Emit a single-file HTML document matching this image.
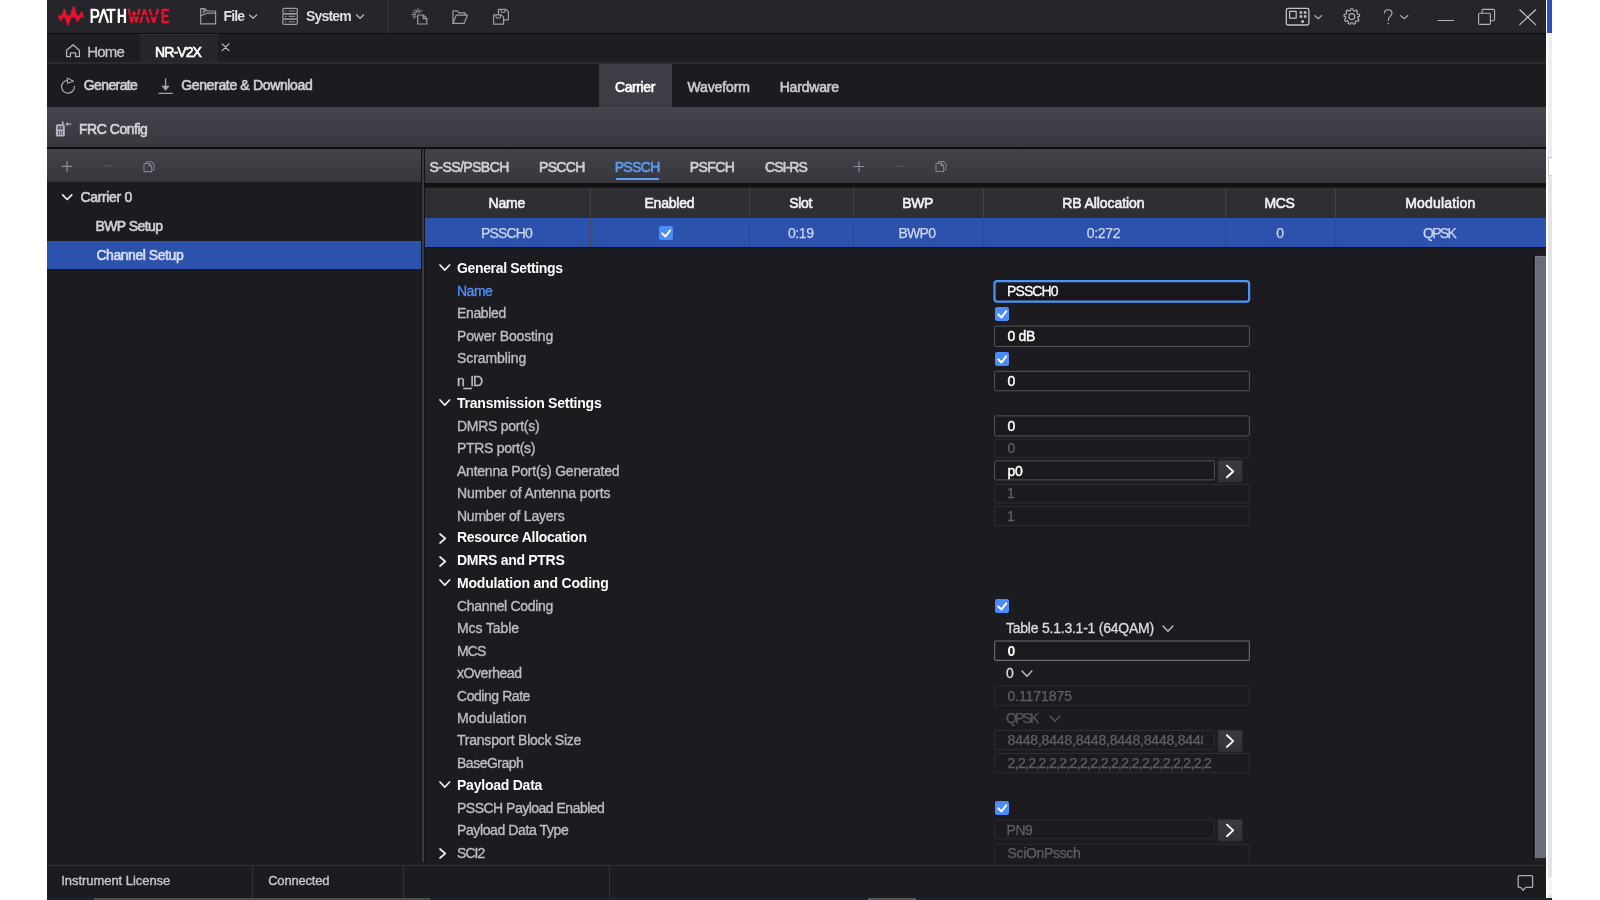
<!DOCTYPE html>
<html><head><meta charset="utf-8"><title>PathWave NR-V2X</title>
<style>
html,body{margin:0;padding:0;background:#fff;}
body{width:1600px;height:900px;position:relative;overflow:hidden;font-family:"Liberation Sans",sans-serif;}
.a{position:absolute;display:block;}
.t{position:absolute;white-space:pre;line-height:20px;height:20px;}
.bx{position:absolute;box-sizing:border-box;border:1px solid #4b4b52;background:#1c1b20;border-radius:1px;}
.bd{border-color:#2d2d32;}
.bh{border-color:#85858d;}
.bf{border:2px solid #4a96f8;border-radius:2.5px;background:#1a191d;}
.btn{position:absolute;width:24px;height:22px;background:#35353b;border-radius:1px;box-shadow:inset 0 0 0 1px #2b2b30;}
#clip{position:absolute;left:0;top:0;width:1600px;height:862px;overflow:hidden;}
#root{position:absolute;left:0;top:0;width:1600px;height:900px;will-change:transform;overflow:hidden;}
</style></head><body><div id="root">
<!-- app background -->
<div class="a" style="left:47px;top:0;width:1499.2px;height:900px;background:#1c1b20"></div>
<!-- right strip -->
<div class="a" style="left:1548.2px;top:33px;width:3.6px;height:124px;background:#efeeed"></div>
<div class="a" style="left:1548.2px;top:157px;width:3.6px;height:743px;background:#e4e4e4"></div>
<div class="a" style="left:1548.2px;top:156.8px;width:3.6px;height:19.6px;background:#fdfdfd;border-top:1.2px solid #c4c4c4;border-left:1px solid #cfcfcf;border-bottom:1px solid #d4d4d4;box-sizing:border-box"></div>
<div class="a" style="left:1548.2px;top:877px;width:3.6px;height:18px;background:#f4f4f4"></div>
<div class="a" style="left:1547px;top:0;width:5px;height:32.6px;background:#2c55b0"></div>
<!-- top bar -->
<div class="a" style="left:47px;top:0;width:1499.2px;height:33px;background:#26252b"></div>
<div class="a" style="left:47px;top:33px;width:1499.2px;height:1.3px;background:#0d0d0f"></div>
<!-- tab row -->
<div class="a" style="left:47px;top:34.3px;width:1499.2px;height:28px;background:#1e1d22"></div>
<div class="a" style="left:140px;top:34.3px;width:78px;height:28px;background:#27262c"></div>
<div class="a" style="left:140px;top:34.2px;width:78px;height:1px;background:#33333a"></div>
<div class="a" style="left:47px;top:62px;width:1499.2px;height:1.6px;background:#2b2a30"></div>
<!-- carrier tab -->
<div class="a" style="left:599px;top:63.6px;width:73px;height:43.6px;background:#3d3d45"></div>
<!-- FRC bar -->
<div class="a" style="left:47px;top:107px;width:1499.2px;height:39.8px;background:linear-gradient(#45454e,#38383f)"></div>
<div class="a" style="left:47px;top:146.8px;width:1499.2px;height:1.8px;background:#0e0e10"></div>
<!-- left panel toolbar -->
<div class="a" style="left:47px;top:148.6px;width:374.3px;height:33.2px;background:linear-gradient(#43434b,#36363c)"></div>
<!-- left selection -->
<div class="a" style="left:47px;top:240.6px;width:374.3px;height:28.8px;background:#2d52ae"></div>
<!-- splitter -->
<div class="a" style="left:421.3px;top:148.6px;width:3.9px;height:717px;background:#131316"></div>
<div class="a" style="left:422.3px;top:148.6px;width:1.9px;height:714px;background:#3a3a41"></div>
<!-- right panel tabs bar -->
<div class="a" style="left:425.2px;top:148.6px;width:1121.3px;height:34.6px;background:linear-gradient(#43434b,#36363c)"></div>
<div class="a" style="left:425.2px;top:183.2px;width:1121.3px;height:4.3px;background:#111113"></div>
<div class="a" style="left:615.7px;top:177.6px;width:43.6px;height:2.8px;background:#5d9bf5"></div>
<!-- table header -->
<div class="a" style="left:425.2px;top:187.5px;width:1121.3px;height:30px;background:#2f2e33"></div>
<div class="a" style="left:425.2px;top:217.5px;width:1121.3px;height:29.6px;background:#2d52ae"></div>
<div class="a" style="left:425.2px;top:247.1px;width:1121.3px;height:1px;background:#141416"></div>
<!-- column lines -->
<div class="a" style="left:589.9px;top:187.5px;width:1px;height:59.7px;background:#45454c;opacity:.9"></div>
<div class="a" style="left:748.7px;top:187.5px;width:1px;height:59.7px;background:#45454c;opacity:.9"></div>
<div class="a" style="left:852.8px;top:187.5px;width:1px;height:59.7px;background:#45454c;opacity:.9"></div>
<div class="a" style="left:982.6px;top:187.5px;width:1px;height:59.7px;background:#45454c;opacity:.9"></div>
<div class="a" style="left:1224.6px;top:187.5px;width:1px;height:59.7px;background:#45454c;opacity:.9"></div>
<div class="a" style="left:1334.6px;top:187.5px;width:1px;height:59.7px;background:#45454c;opacity:.9"></div>
<!-- scrollbar -->
<div class="a" style="left:1533px;top:253px;width:1.4px;height:609px;background:#101012"></div>
<div class="a" style="left:1534.4px;top:253px;width:12px;height:609px;background:#222126"></div>
<div class="a" style="left:1535.2px;top:255.5px;width:10.5px;height:602px;background:#696d79;border-radius:1.5px;box-shadow:inset 1px 1px 0 #787c88"></div>

<div id="clip">
<svg class="a" style="left:0;top:0" width="1600" height="900" viewBox="0 0 1600 900"><defs><linearGradient id="bg" x1="0" y1="0" x2="0" y2="1"><stop offset="0" stop-color="#3b3b42"/><stop offset="1" stop-color="#313137"/></linearGradient></defs><rect x="994.50" y="281.20" width="254.60" height="20.40" rx="2.6" fill="#19181c" stroke="#4a96f8" stroke-width="2.2"/>
<rect x="994.60" y="326.10" width="254.80" height="20.40" rx="1.0" fill="#1b1a1f" stroke="#54555e" stroke-width="1"/>
<rect x="994.60" y="371.30" width="254.80" height="19.50" rx="1.0" fill="#1b1a1f" stroke="#54555e" stroke-width="1"/>
<rect x="994.60" y="415.90" width="254.80" height="20.10" rx="1.0" fill="#1b1a1f" stroke="#54555e" stroke-width="1"/>
<rect x="994.60" y="439.20" width="254.80" height="18.70" rx="1.0" fill="#1c1b20" stroke="#2e2e34" stroke-width="1"/>
<rect x="994.60" y="460.80" width="219.80" height="19.10" rx="1.0" fill="#1b1a1f" stroke="#54555e" stroke-width="1"/>
<rect x="1217.8" y="460.30" width="24.5" height="22.10" rx="1.2" fill="url(#bg)" stroke="#26262b" stroke-width="0.8"/>
<path d="M1226.9 465.65 L1233.2 471.45 L1226.9 477.25" fill="none" stroke="#ffffff" stroke-width="1.9" stroke-linecap="round" stroke-linejoin="round"/>
<rect x="994.60" y="484.30" width="254.80" height="18.70" rx="1.0" fill="#1c1b20" stroke="#2e2e34" stroke-width="1"/>
<rect x="994.60" y="506.60" width="254.80" height="19.00" rx="1.0" fill="#1c1b20" stroke="#2e2e34" stroke-width="1"/>
<rect x="994.65" y="640.95" width="254.70" height="19.40" rx="1.0" fill="#1b1a1f" stroke="#6c6e7a" stroke-width="1.1"/>
<rect x="994.60" y="685.90" width="254.80" height="19.40" rx="1.0" fill="#1c1b20" stroke="#2e2e34" stroke-width="1"/>
<rect x="994.60" y="730.50" width="219.80" height="19.10" rx="1.0" fill="#1c1b20" stroke="#2e2e34" stroke-width="1"/>
<rect x="1217.8" y="730.00" width="24.5" height="22.00" rx="1.2" fill="url(#bg)" stroke="#26262b" stroke-width="0.8"/>
<path d="M1226.9 735.30 L1233.2 741.10 L1226.9 746.90" fill="none" stroke="#ffffff" stroke-width="1.9" stroke-linecap="round" stroke-linejoin="round"/>
<rect x="994.60" y="753.50" width="254.80" height="19.20" rx="1.0" fill="#1c1b20" stroke="#2e2e34" stroke-width="1"/>
<rect x="994.60" y="819.80" width="219.80" height="19.00" rx="1.0" fill="#1c1b20" stroke="#2e2e34" stroke-width="1"/>
<rect x="1217.8" y="819.30" width="24.5" height="22.00" rx="1.2" fill="url(#bg)" stroke="#26262b" stroke-width="0.8"/>
<path d="M1226.9 824.60 L1233.2 830.40 L1226.9 836.20" fill="none" stroke="#ffffff" stroke-width="1.9" stroke-linecap="round" stroke-linejoin="round"/>
<rect x="994.60" y="844.20" width="254.80" height="21.30" rx="1.0" fill="#1c1b20" stroke="#2e2e34" stroke-width="1"/></svg>
<svg class="a" style="left:438.1px;top:262.5px" width="13.6" height="9.2" viewBox="-2 -2 13.6 9.2"><path d="M0 0 L4.8 5.2 L9.6 0" fill="none" stroke="#ececf0" stroke-width="1.7" stroke-linecap="round" stroke-linejoin="round"/></svg>
<svg class="a" style="left:438.1px;top:397.5px" width="13.6" height="9.2" viewBox="-2 -2 13.6 9.2"><path d="M0 0 L4.8 5.2 L9.6 0" fill="none" stroke="#ececf0" stroke-width="1.7" stroke-linecap="round" stroke-linejoin="round"/></svg>
<svg class="a" style="left:438.4px;top:532.4px" width="9.3" height="13.0" viewBox="-2 -2 9.3 13.0"><path d="M0 0 L5.3 4.5 L0 9.0" fill="none" stroke="#ececf0" stroke-width="1.7" stroke-linecap="round" stroke-linejoin="round"/></svg>
<svg class="a" style="left:438.4px;top:554.9px" width="9.3" height="13.0" viewBox="-2 -2 9.3 13.0"><path d="M0 0 L5.3 4.5 L0 9.0" fill="none" stroke="#ececf0" stroke-width="1.7" stroke-linecap="round" stroke-linejoin="round"/></svg>
<svg class="a" style="left:438.1px;top:577.5px" width="13.6" height="9.2" viewBox="-2 -2 13.6 9.2"><path d="M0 0 L4.8 5.2 L9.6 0" fill="none" stroke="#ececf0" stroke-width="1.7" stroke-linecap="round" stroke-linejoin="round"/></svg>
<svg class="a" style="left:438.1px;top:780.0px" width="13.6" height="9.2" viewBox="-2 -2 13.6 9.2"><path d="M0 0 L4.8 5.2 L9.6 0" fill="none" stroke="#ececf0" stroke-width="1.7" stroke-linecap="round" stroke-linejoin="round"/></svg>
<svg class="a" style="left:438.4px;top:847.4px" width="9.3" height="13.0" viewBox="-2 -2 9.3 13.0"><path d="M0 0 L5.3 4.5 L0 9.0" fill="none" stroke="#ececf0" stroke-width="1.7" stroke-linecap="round" stroke-linejoin="round"/></svg>
<svg class="a" style="left:995.1px;top:306.9px" width="14" height="14" viewBox="0 0 14 14"><rect x="0" y="0" width="14" height="14" rx="2" fill="#4b8df8"/><path d="M3.3 7.4 L6.5 10.4 L11.2 4.4" fill="none" stroke="#fff" stroke-width="2.0" stroke-linecap="round" stroke-linejoin="round"/></svg>
<svg class="a" style="left:995.1px;top:351.9px" width="14" height="14" viewBox="0 0 14 14"><rect x="0" y="0" width="14" height="14" rx="2" fill="#4b8df8"/><path d="M3.3 7.4 L6.5 10.4 L11.2 4.4" fill="none" stroke="#fff" stroke-width="2.0" stroke-linecap="round" stroke-linejoin="round"/></svg>
<svg class="a" style="left:995.1px;top:598.5px" width="14" height="14" viewBox="0 0 14 14"><rect x="0" y="0" width="14" height="14" rx="2" fill="#4b8df8"/><path d="M3.3 7.4 L6.5 10.4 L11.2 4.4" fill="none" stroke="#fff" stroke-width="2.0" stroke-linecap="round" stroke-linejoin="round"/></svg>
<svg class="a" style="left:1161.3px;top:623.9px" width="13.9" height="9.3" viewBox="-2 -2 13.9 9.3"><path d="M0 0 L4.95 5.3 L9.9 0" fill="none" stroke="#b9c0cf" stroke-width="1.4" stroke-linecap="round" stroke-linejoin="round"/></svg>
<svg class="a" style="left:1020.2px;top:669.3px" width="13.9" height="9.3" viewBox="-2 -2 13.9 9.3"><path d="M0 0 L4.95 5.3 L9.9 0" fill="none" stroke="#b9c0cf" stroke-width="1.4" stroke-linecap="round" stroke-linejoin="round"/></svg>
<svg class="a" style="left:1047.8px;top:714.0999999999999px" width="13.9" height="9.3" viewBox="-2 -2 13.9 9.3"><path d="M0 0 L4.95 5.3 L9.9 0" fill="none" stroke="#55565e" stroke-width="1.4" stroke-linecap="round" stroke-linejoin="round"/></svg>
<svg class="a" style="left:995.1px;top:801.3px" width="14" height="14" viewBox="0 0 14 14"><rect x="0" y="0" width="14" height="14" rx="2" fill="#4b8df8"/><path d="M3.3 7.4 L6.5 10.4 L11.2 4.4" fill="none" stroke="#fff" stroke-width="2.0" stroke-linecap="round" stroke-linejoin="round"/></svg>
<svg class="a" style="left:658.7px;top:225.7px" width="14" height="14" viewBox="0 0 14 14"><rect x="0" y="0" width="14" height="14" rx="2" fill="#4b8df8"/><path d="M3.3 7.4 L6.5 10.4 L11.2 4.4" fill="none" stroke="#fff" stroke-width="2.0" stroke-linecap="round" stroke-linejoin="round"/></svg>
<span class="t" style="left:223.50px;top:8px;line-height:16px;height:16px;font-size:14px;color:#e0e0e4;letter-spacing:-0.844px;font-weight:700;">File</span>
<span class="t" style="left:305.90px;top:8px;line-height:16px;height:16px;font-size:14px;color:#e0e0e4;letter-spacing:-0.792px;font-weight:700;">System</span>
<span class="t" style="left:87.20px;top:43px;line-height:17px;height:17px;font-size:15px;color:#c4c4c9;letter-spacing:-0.790px;-webkit-text-stroke:0.3px #c4c4c9;">Home</span>
<span class="t" style="left:155.10px;top:44px;line-height:16px;height:16px;font-size:14px;color:#ffffff;letter-spacing:-0.901px;-webkit-text-stroke:0.6px #ffffff;">NR-V2X</span>
<span class="t" style="left:83.75px;top:77px;line-height:16px;height:16px;font-size:14px;color:#d0d0d5;letter-spacing:-0.605px;-webkit-text-stroke:0.6px #d0d0d5;">Generate</span>
<span class="t" style="left:181.20px;top:77px;line-height:16px;height:16px;font-size:14px;color:#d0d0d5;letter-spacing:-0.342px;-webkit-text-stroke:0.6px #d0d0d5;">Generate &amp; Download</span>
<span class="t" style="left:615.00px;top:79px;line-height:16px;height:16px;font-size:14px;color:#ffffff;letter-spacing:-0.403px;-webkit-text-stroke:0.6px #ffffff;">Carrier</span>
<span class="t" style="left:687.50px;top:79px;line-height:16px;height:16px;font-size:14px;color:#c9c9ce;letter-spacing:-0.129px;-webkit-text-stroke:0.6px #c9c9ce;">Waveform</span>
<span class="t" style="left:779.70px;top:79px;line-height:16px;height:16px;font-size:14px;color:#c9c9ce;letter-spacing:-0.200px;-webkit-text-stroke:0.6px #c9c9ce;">Hardware</span>
<span class="t" style="left:79.00px;top:121px;line-height:16px;height:16px;font-size:14px;color:#d4d4d9;letter-spacing:-0.472px;-webkit-text-stroke:0.6px #d4d4d9;">FRC Config</span>
<span class="t" style="left:80.50px;top:189px;line-height:16px;height:16px;font-size:14px;color:#cfcfd4;letter-spacing:-0.346px;-webkit-text-stroke:0.6px #cfcfd4;">Carrier 0</span>
<span class="t" style="left:95.40px;top:218px;line-height:16px;height:16px;font-size:14px;color:#cfcfd4;letter-spacing:-0.560px;-webkit-text-stroke:0.6px #cfcfd4;">BWP Setup</span>
<span class="t" style="left:96.40px;top:247px;line-height:16px;height:16px;font-size:14px;color:#d5dcf5;letter-spacing:-0.445px;-webkit-text-stroke:0.6px #d5dcf5;">Channel Setup</span>
<span class="t" style="left:429.50px;top:159px;line-height:16px;height:16px;font-size:14px;color:#d0d0d5;letter-spacing:-0.554px;-webkit-text-stroke:0.6px #d0d0d5;">S-SS/PSBCH</span>
<span class="t" style="left:539.00px;top:159px;line-height:16px;height:16px;font-size:14px;color:#d0d0d5;letter-spacing:-0.674px;-webkit-text-stroke:0.6px #d0d0d5;">PSCCH</span>
<span class="t" style="left:614.70px;top:159px;line-height:16px;height:16px;font-size:14px;color:#5d9bf5;letter-spacing:-0.656px;-webkit-text-stroke:0.6px #5d9bf5;">PSSCH</span>
<span class="t" style="left:689.70px;top:159px;line-height:16px;height:16px;font-size:14px;color:#d0d0d5;letter-spacing:-0.584px;-webkit-text-stroke:0.6px #d0d0d5;">PSFCH</span>
<span class="t" style="left:765.00px;top:159px;line-height:16px;height:16px;font-size:14px;color:#d0d0d5;letter-spacing:-0.922px;-webkit-text-stroke:0.6px #d0d0d5;">CSI-RS</span>
<span class="t" style="left:488.50px;top:195px;line-height:16px;height:16px;font-size:14px;color:#f2f2f4;letter-spacing:-0.186px;-webkit-text-stroke:0.6px #f2f2f4;">Name</span>
<span class="t" style="left:644.50px;top:195px;line-height:16px;height:16px;font-size:14px;color:#f2f2f4;letter-spacing:-0.232px;-webkit-text-stroke:0.6px #f2f2f4;">Enabled</span>
<span class="t" style="left:789.20px;top:195px;line-height:16px;height:16px;font-size:14px;color:#f2f2f4;letter-spacing:-0.311px;-webkit-text-stroke:0.6px #f2f2f4;">Slot</span>
<span class="t" style="left:902.20px;top:195px;line-height:16px;height:16px;font-size:14px;color:#f2f2f4;letter-spacing:-0.376px;-webkit-text-stroke:0.6px #f2f2f4;">BWP</span>
<span class="t" style="left:1062.20px;top:195px;line-height:16px;height:16px;font-size:14px;color:#f2f2f4;letter-spacing:-0.080px;-webkit-text-stroke:0.6px #f2f2f4;">RB Allocation</span>
<span class="t" style="left:1264.50px;top:195px;line-height:16px;height:16px;font-size:14px;color:#f2f2f4;letter-spacing:-0.386px;-webkit-text-stroke:0.6px #f2f2f4;">MCS</span>
<span class="t" style="left:1405.20px;top:195px;line-height:16px;height:16px;font-size:14px;color:#f2f2f4;letter-spacing:0.177px;-webkit-text-stroke:0.6px #f2f2f4;">Modulation</span>
<span class="t" style="left:481.00px;top:225px;line-height:16px;height:16px;font-size:14px;color:#cdd6f2;letter-spacing:-0.847px;-webkit-text-stroke:0.25px #cdd6f2;">PSSCH0</span>
<span class="t" style="left:788.00px;top:225px;line-height:16px;height:16px;font-size:14px;color:#cdd6f2;letter-spacing:-0.421px;-webkit-text-stroke:0.25px #cdd6f2;">0:19</span>
<span class="t" style="left:898.50px;top:225px;line-height:16px;height:16px;font-size:14px;color:#cdd6f2;letter-spacing:-0.730px;-webkit-text-stroke:0.25px #cdd6f2;">BWP0</span>
<span class="t" style="left:1086.70px;top:225px;line-height:16px;height:16px;font-size:14px;color:#cdd6f2;letter-spacing:-0.312px;-webkit-text-stroke:0.25px #cdd6f2;">0:272</span>
<span class="t" style="left:1276.20px;top:225px;line-height:16px;height:16px;font-size:14px;color:#cdd6f2;letter-spacing:0.000px;-webkit-text-stroke:0.25px #cdd6f2;">0</span>
<span class="t" style="left:1423.00px;top:225px;line-height:16px;height:16px;font-size:14px;color:#cdd6f2;letter-spacing:-1.688px;-webkit-text-stroke:0.25px #cdd6f2;">QPSK</span>
<span class="t" style="left:457.00px;top:260px;line-height:16px;height:16px;font-size:14px;color:#ffffff;letter-spacing:-0.351px;font-weight:700;">General Settings</span>
<span class="t" style="left:457.00px;top:283px;line-height:16px;height:16px;font-size:14px;color:#4c8ff8;letter-spacing:-0.486px;-webkit-text-stroke:0.35px #4c8ff8;">Name</span>
<span class="t" style="left:457.00px;top:305px;line-height:16px;height:16px;font-size:14px;color:#bebec2;letter-spacing:-0.349px;-webkit-text-stroke:0.35px #bebec2;">Enabled</span>
<span class="t" style="left:457.00px;top:328px;line-height:16px;height:16px;font-size:14px;color:#bebec2;letter-spacing:-0.144px;-webkit-text-stroke:0.35px #bebec2;">Power Boosting</span>
<span class="t" style="left:457.00px;top:350px;line-height:16px;height:16px;font-size:14px;color:#bebec2;letter-spacing:-0.093px;-webkit-text-stroke:0.35px #bebec2;">Scrambling</span>
<span class="t" style="left:457.00px;top:373px;line-height:16px;height:16px;font-size:14px;color:#bebec2;letter-spacing:-1.154px;-webkit-text-stroke:0.35px #bebec2;">n_ID</span>
<span class="t" style="left:457.00px;top:395px;line-height:16px;height:16px;font-size:14px;color:#ffffff;letter-spacing:-0.234px;font-weight:700;">Transmission Settings</span>
<span class="t" style="left:457.00px;top:418px;line-height:16px;height:16px;font-size:14px;color:#bebec2;letter-spacing:-0.272px;-webkit-text-stroke:0.35px #bebec2;">DMRS port(s)</span>
<span class="t" style="left:457.00px;top:440px;line-height:16px;height:16px;font-size:14px;color:#bebec2;letter-spacing:-0.301px;-webkit-text-stroke:0.35px #bebec2;">PTRS port(s)</span>
<span class="t" style="left:457.00px;top:463px;line-height:16px;height:16px;font-size:14px;color:#bebec2;letter-spacing:-0.234px;-webkit-text-stroke:0.35px #bebec2;">Antenna Port(s) Generated</span>
<span class="t" style="left:457.00px;top:485px;line-height:16px;height:16px;font-size:14px;color:#bebec2;letter-spacing:-0.101px;-webkit-text-stroke:0.35px #bebec2;">Number of Antenna ports</span>
<span class="t" style="left:457.00px;top:508px;line-height:16px;height:16px;font-size:14px;color:#bebec2;letter-spacing:-0.238px;-webkit-text-stroke:0.35px #bebec2;">Number of Layers</span>
<span class="t" style="left:457.00px;top:529px;line-height:16px;height:16px;font-size:14px;color:#ffffff;letter-spacing:-0.273px;font-weight:700;">Resource Allocation</span>
<span class="t" style="left:457.00px;top:552px;line-height:16px;height:16px;font-size:14px;color:#ffffff;letter-spacing:-0.291px;font-weight:700;">DMRS and PTRS</span>
<span class="t" style="left:457.00px;top:575px;line-height:16px;height:16px;font-size:14px;color:#ffffff;letter-spacing:-0.189px;font-weight:700;">Modulation and Coding</span>
<span class="t" style="left:457.00px;top:598px;line-height:16px;height:16px;font-size:14px;color:#bebec2;letter-spacing:-0.325px;-webkit-text-stroke:0.35px #bebec2;">Channel Coding</span>
<span class="t" style="left:457.00px;top:620px;line-height:16px;height:16px;font-size:14px;color:#bebec2;letter-spacing:-0.104px;-webkit-text-stroke:0.35px #bebec2;">Mcs Table</span>
<span class="t" style="left:457.00px;top:643px;line-height:16px;height:16px;font-size:14px;color:#bebec2;letter-spacing:-0.886px;-webkit-text-stroke:0.35px #bebec2;">MCS</span>
<span class="t" style="left:457.00px;top:665px;line-height:16px;height:16px;font-size:14px;color:#bebec2;letter-spacing:-0.437px;-webkit-text-stroke:0.35px #bebec2;">xOverhead</span>
<span class="t" style="left:457.00px;top:688px;line-height:16px;height:16px;font-size:14px;color:#bebec2;letter-spacing:-0.444px;-webkit-text-stroke:0.35px #bebec2;">Coding Rate</span>
<span class="t" style="left:457.00px;top:710px;line-height:16px;height:16px;font-size:14px;color:#bebec2;letter-spacing:0.111px;-webkit-text-stroke:0.35px #bebec2;">Modulation</span>
<span class="t" style="left:457.00px;top:732px;line-height:16px;height:16px;font-size:14px;color:#bebec2;letter-spacing:-0.224px;-webkit-text-stroke:0.35px #bebec2;">Transport Block Size</span>
<span class="t" style="left:457.00px;top:755px;line-height:16px;height:16px;font-size:14px;color:#bebec2;letter-spacing:-0.492px;-webkit-text-stroke:0.35px #bebec2;">BaseGraph</span>
<span class="t" style="left:457.00px;top:777px;line-height:16px;height:16px;font-size:14px;color:#ffffff;letter-spacing:-0.231px;font-weight:700;">Payload Data</span>
<span class="t" style="left:457.00px;top:800px;line-height:16px;height:16px;font-size:14px;color:#bebec2;letter-spacing:-0.505px;-webkit-text-stroke:0.35px #bebec2;">PSSCH Payload Enabled</span>
<span class="t" style="left:457.00px;top:822px;line-height:16px;height:16px;font-size:14px;color:#bebec2;letter-spacing:-0.394px;-webkit-text-stroke:0.35px #bebec2;">Payload Data Type</span>
<span class="t" style="left:457.00px;top:845px;line-height:16px;height:16px;font-size:14px;color:#bebec2;letter-spacing:-0.913px;-webkit-text-stroke:0.35px #bebec2;">SCI2</span>
<span class="t" style="left:1007.10px;top:283px;line-height:16px;height:16px;font-size:14px;color:#ffffff;letter-spacing:-0.927px;-webkit-text-stroke:0.3px #ffffff;">PSSCH0</span>
<span class="t" style="left:1007.50px;top:328px;line-height:16px;height:16px;font-size:14px;color:#ffffff;letter-spacing:-0.321px;-webkit-text-stroke:0.45px #ffffff;">0 dB</span>
<span class="t" style="left:1007.40px;top:373px;line-height:16px;height:16px;font-size:14px;color:#ffffff;letter-spacing:0.000px;-webkit-text-stroke:0.45px #ffffff;">0</span>
<span class="t" style="left:1007.40px;top:418px;line-height:16px;height:16px;font-size:14px;color:#ffffff;letter-spacing:0.000px;-webkit-text-stroke:0.45px #ffffff;">0</span>
<span class="t" style="left:1007.40px;top:440px;line-height:16px;height:16px;font-size:14px;color:#606066;letter-spacing:0.000px;-webkit-text-stroke:0.25px #606066;">0</span>
<span class="t" style="left:1007.60px;top:463px;line-height:16px;height:16px;font-size:14px;color:#ffffff;letter-spacing:-0.386px;-webkit-text-stroke:0.45px #ffffff;">p0</span>
<span class="t" style="left:1007.10px;top:485px;line-height:16px;height:16px;font-size:14px;color:#606066;letter-spacing:0.000px;-webkit-text-stroke:0.25px #606066;">1</span>
<span class="t" style="left:1007.10px;top:508px;line-height:16px;height:16px;font-size:14px;color:#606066;letter-spacing:0.000px;-webkit-text-stroke:0.25px #606066;">1</span>
<span class="t" style="left:1006.00px;top:620px;line-height:16px;height:16px;font-size:14px;color:#dcdce0;letter-spacing:-0.233px;-webkit-text-stroke:0.3px #dcdce0;">Table 5.1.3.1-1 (64QAM)</span>
<span class="t" style="left:1007.40px;top:643px;line-height:16px;height:16px;font-size:14px;color:#ffffff;letter-spacing:0.000px;font-weight:700;">0</span>
<span class="t" style="left:1006.00px;top:665px;line-height:16px;height:16px;font-size:14px;color:#dcdce0;letter-spacing:0.000px;-webkit-text-stroke:0.3px #dcdce0;">0</span>
<span class="t" style="left:1007.40px;top:688px;line-height:16px;height:16px;font-size:14px;color:#606066;letter-spacing:-0.069px;-webkit-text-stroke:0.25px #606066;">0.1171875</span>
<span class="t" style="left:1005.90px;top:710px;line-height:16px;height:16px;font-size:14px;color:#58585e;letter-spacing:-1.855px;-webkit-text-stroke:0.25px #58585e;">QPSK</span>
<span class="t" style="left:1007.60px;top:732px;line-height:16px;height:16px;font-size:14px;color:#606066;letter-spacing:-0.201px;-webkit-text-stroke:0.25px #606066;width:195.40px;overflow:hidden;">8448,8448,8448,8448,8448,8448</span>
<span class="t" style="left:1007.60px;top:755px;line-height:16px;height:16px;font-size:14px;color:#606066;letter-spacing:-0.669px;-webkit-text-stroke:0.25px #606066;">2,2,2,2,2,2,2,2,2,2,2,2,2,2,2,2,2,2,2,2</span>
<span class="t" style="left:1006.60px;top:822px;line-height:16px;height:16px;font-size:14px;color:#606066;letter-spacing:-0.474px;-webkit-text-stroke:0.25px #606066;">PN9</span>
<span class="t" style="left:1007.60px;top:845px;line-height:16px;height:16px;font-size:14px;color:#606066;letter-spacing:-0.340px;-webkit-text-stroke:0.25px #606066;">SciOnPssch</span>
</div>

<!-- status bar -->
<div class="a" style="left:47px;top:862px;width:1499.2px;height:36.5px;background:#1c1b20"></div>
<div class="a" style="left:47px;top:864.6px;width:1499.2px;height:1.2px;background:#323238"></div>
<div class="a" style="left:251.8px;top:866px;width:1px;height:32px;background:#323238"></div>
<div class="a" style="left:402.8px;top:866px;width:1px;height:32px;background:#323238"></div>
<div class="a" style="left:608.8px;top:866px;width:1px;height:32px;background:#323238"></div>
<!-- bottom strip -->
<div class="a" style="left:47px;top:898.2px;width:1505px;height:1.8px;background:#18282f"></div>
<div class="a" style="left:93.5px;top:898.3px;width:336px;height:1.7px;background:#4e4e52"></div>
<div class="a" style="left:868px;top:898.3px;width:48px;height:1.7px;background:#55555a"></div>
<svg class="a" style="left:0;top:0" width="1600" height="900" viewBox="0 0 1600 900" fill="none" stroke-linecap="round" stroke-linejoin="round">
<!-- logo wave -->
<path d="M58.40 16.40 L59.23 18.29 L59.88 20.45 L60.40 20.90 L60.92 20.45 L62.77 18.29 L63.60 16.40 Z M61.70 16.40 L62.53 13.33 L63.88 9.83 L64.40 9.10 L64.92 9.83 L66.07 13.33 L66.90 16.40 Z M65.10 16.40 L66.06 20.26 L67.40 24.68 L68.00 25.60 L68.60 24.68 L70.14 20.26 L71.10 16.40 Z M70.50 16.40 L71.52 12.07 L72.96 7.13 L73.60 6.10 L74.24 7.13 L75.88 12.07 L76.90 16.40 Z M75.10 16.40 L75.93 18.63 L77.18 21.17 L77.70 21.70 L78.22 21.17 L79.47 18.63 L80.30 16.40 Z M79.50 16.40 L80.14 14.38 L81.00 12.08 L81.40 11.60 L81.80 12.08 L82.86 14.38 L83.50 16.40 Z" fill="#e9112f" stroke="#e9112f" stroke-width="0.7" stroke-linejoin="round"/>
<rect x="58.6" y="15.5" width="24.6" height="1.9" rx="0.9" fill="#e9112f" stroke="none"/>
<!-- PATH -->
<g stroke="#ffffff" stroke-width="2.3" stroke-linecap="butt" stroke-linejoin="miter">
<path d="M91.7 22.9 V8.7 M91.7 9.8 H94.6 C99.6 9.8 99.6 17 94.6 17 H91.7"/>
<path d="M99.2 22.9 L103.7 9.2 L108.2 22.9" stroke-linejoin="bevel"/>
<path d="M106.4 9.8 H115.6 M111 9.8 V22.9"/>
<path d="M118.8 8.7 V22.9 M124.9 8.7 V22.9 M118.8 15.8 H124.9"/>
</g>
<!-- WAVE -->
<g stroke="#e9112f" stroke-width="2.2" stroke-linecap="butt" stroke-linejoin="bevel">
<path d="M128.6 8.8 L131.6 22.6 L134 11.6 L136.4 22.6 L139.4 8.8"/>
<path d="M140.4 22.9 L144.6 9.2 L148.8 22.9"/>
<path d="M149.4 8.8 L153.8 22.6 L158.2 8.8"/>
<path d="M169 9.8 H162.7 V21.9 H169 M162.7 15.9 H168.2" stroke-linejoin="miter"/>
</g>
<rect x="127.5" y="15.2" width="32.5" height="1.3" fill="#26252b" stroke="none"/>
<!-- File icon -->
<g stroke="#9c9ca6" stroke-width="1.2">
<path d="M200.7 23.8 V8.6 H205 L207 11 H215.6 V23.8 Z"/>
<path d="M207 13.2 H215.6 M207 13.2 L200.7 15.6 M203 9.6 L205.3 11 L203 12.4"/>
</g>
<path d="M249.6 15 L253.1 18.2 L256.6 15" stroke="#b6b6bd" stroke-width="1.3"/>
<!-- System icon -->
<g stroke="#9c9ca6" stroke-width="1.2">
<rect x="282.8" y="8.4" width="14.6" height="5.2" rx="1.4"/>
<rect x="282.8" y="13.8" width="14.6" height="5.2" rx="1.4"/>
<rect x="282.8" y="19.2" width="14.6" height="5.2" rx="1.4"/>
<path d="M285.4 11 H286 M289 11 H294.6 M285.4 16.4 H286 M289 16.4 H294.6 M285.4 21.8 H286 M289 21.8 H294.6" stroke-width="1.1" stroke="#8c8c96"/>
</g>
<path d="M356.6 15 L360.1 18.2 L363.6 15" stroke="#b6b6bd" stroke-width="1.3"/>
<!-- divider -->
<rect x="387.6" y="0" width="1" height="33" fill="#3a3a41" stroke="none"/>
<!-- new doc icon -->
<g stroke="#9c9ea8" stroke-width="1.15">
<path d="M417.7 15 H423.4 L426.8 18.4 V24 H417.7 Z M423.2 15.2 V18.6 H426.6"/>
<path d="M417.80 12.20 L417.80 8.60 M419.50 12.90 L422.04 10.36 M416.10 12.90 L413.56 10.36 M415.40 14.60 L411.80 14.60 M416.10 16.30 L413.56 18.84 M416.65 11.83 L415.81 9.80 M415.03 13.45 L413.00 12.61 M418.95 11.83 L419.79 9.80 M415.03 15.75 L413.00 16.59" stroke-width="0.95"/>
</g>
<!-- open folder icon -->
<g stroke="#9c9ca6" stroke-width="1.2">
<path d="M453 23.4 V10.9 H457.4 L459 12.8 H465.2 V15.2"/>
<path d="M453 23.4 L456.2 15.2 H467.4 L464.2 23.4 Z"/>
</g>
<!-- save all icon -->
<g stroke="#9c9ca6" stroke-width="1.2">
<path d="M498.4 14 V9.4 H506 L508.4 11.8 V19.8 H504.4"/>
<path d="M501 9.6 V12.2 H505 V9.6" stroke-width="1"/>
<path d="M493.6 24.2 V14.8 H501.2 L503.6 17.2 V24.2 Z" fill="#26252b"/>
<path d="M496 15 V18 H500.4 V15" stroke-width="1"/>
</g>
<!-- layout icon -->
<g stroke="#c0c0c8" stroke-width="1.3">
<rect x="1286.3" y="8.4" width="22.6" height="16.6" rx="1.8"/>
<rect x="1289.6" y="11.4" width="6.6" height="6.8" stroke-width="1.2"/>
</g>
<g fill="#c0c0c8" stroke="none">
<rect x="1299.6" y="11.2" width="2.6" height="2.6"/><rect x="1303.8" y="11.2" width="2.6" height="2.6"/>
<rect x="1299.6" y="15.2" width="2.6" height="2.6"/><rect x="1303.8" y="15.2" width="2.6" height="2.6"/>
<circle cx="1302.6" cy="21.4" r="1.5"/>
</g>
<path d="M1314.8 15.6 L1318.2 18.6 L1321.6 15.6" stroke="#c0c0c8" stroke-width="1.2"/>
<!-- gear -->
<g stroke="#b4b4bc" stroke-width="1.1">
<circle cx="1351.8" cy="16.6" r="3"/>
<path d="M1350.76 8.77 L1352.84 8.77 L1353.13 10.54 L1354.67 11.11 L1356.03 9.93 L1357.63 11.27 L1356.71 12.82 L1357.53 14.24 L1359.33 14.21 L1359.69 16.27 L1357.99 16.86 L1357.71 18.47 L1359.10 19.61 L1358.06 21.42 L1356.38 20.78 L1355.12 21.83 L1355.46 23.60 L1353.50 24.32 L1352.62 22.75 L1350.98 22.75 L1350.10 24.32 L1348.14 23.60 L1348.48 21.83 L1347.22 20.78 L1345.54 21.42 L1344.50 19.61 L1345.89 18.47 L1345.61 16.86 L1343.91 16.27 L1344.27 14.21 L1346.07 14.24 L1346.89 12.82 L1345.97 11.27 L1347.57 9.93 L1348.93 11.11 L1350.47 10.54 Z" stroke-linejoin="round"/>
</g>
<!-- question -->
<path d="M1384.4 13 C1384.4 8.6 1392 8.6 1392 13 C1392 16.2 1388.2 16 1388.2 20.4" stroke="#b4b4bc" stroke-width="1.1"/>
<circle cx="1388.2" cy="23.6" r="0.8" fill="#b4b4bc" stroke="none"/>
<path d="M1400.6 15.6 L1404.2 18.6 L1407.8 15.6" stroke="#c0c0c8" stroke-width="1.2"/>
<!-- window controls -->
<path d="M1438 20.5 H1453.6" stroke="#b4b4bc" stroke-width="1.1"/>
<g stroke="#b4b4bc" stroke-width="1.1">
<path d="M1482 13 V10.6 Q1482 9.4 1483.2 9.4 H1493.4 Q1494.6 9.4 1494.6 10.6 V19.6 Q1494.6 20.8 1493.4 20.8 H1490.6"/>
<rect x="1478.6" y="13.2" width="11.8" height="11.2" rx="1.2"/>
</g>
<path d="M1519.8 9.8 L1535.6 24.6 M1535.6 9.8 L1519.8 24.6" stroke="#c4c4cc" stroke-width="1.2"/>
<!-- home icon -->
<path d="M66.6 50.2 L73 44.8 L79.4 50.2 V56.7 H75.6 V52.9 H70.4 V56.7 H66.6 Z" stroke="#b4b4ba" stroke-width="1.3" stroke-linejoin="round"/>
<!-- tab close -->
<path d="M222.2 43.8 L228.9 50.7 M228.9 43.8 L222.2 50.7" stroke="#c0c0c5" stroke-width="1.2"/>
<!-- generate icon -->
<g stroke="#a2a6b2" stroke-width="1.3">
<path d="M74.4 86.4 A6.4 6.4 0 1 1 67.4 80.4"/>
<path d="M67.1 78 L73.5 81.2 L67.6 83.3 Z" stroke-width="1.1"/>
</g>
<!-- download icon -->
<path d="M165.6 78.8 V88" stroke="#a2a6b2" stroke-width="1.3"/>
<path d="M161.4 85.8 H169.8 L165.6 90.8 Z" fill="#a2a6b2" stroke="none"/>
<path d="M159 93.3 H172.4" stroke="#a2a6b2" stroke-width="1.3"/>
<!-- FRC icon -->
<rect x="55.9" y="124.3" width="8.9" height="12.2" rx="1.6" fill="#b2b6c4" stroke="none"/>
<rect x="62" y="121.3" width="1.5" height="3.6" fill="#b2b6c4" stroke="none"/>
<rect x="57.7" y="126.2" width="5.3" height="3.2" fill="#3f3f48" stroke="none"/>
<path d="M60.35 126.2 V129.4 M57.7 127.8 H63" stroke="#9a9eac" stroke-width="0.6"/>
<path d="M58.5 131 V135 M60.35 131 V135 M62.2 131 V135" stroke="#55565f" stroke-width="0.9" stroke-linecap="butt"/>
<path d="M67 124.1 H71.3" stroke="#b2b6c4" stroke-width="1.2" stroke-linecap="butt"/>
<path d="M65.3 124.1 L68 122.3 V125.9 Z" fill="#b2b6c4" stroke="none"/>
<!-- left toolbar -->
<path d="M62.2 166.3 H71.9 M67 161.4 V171.3" stroke="#90929e" stroke-width="1.15"/>
<path d="M104 166 H112" stroke="#5a5b66" stroke-width="1.15"/>
<g stroke="#82848f" stroke-width="1.05">
<path d="M146.6 163 V161.8 H151.6 L154 164.2 V170 H152"/>
<path d="M144 163.4 H149.2 L151.6 165.8 V171.6 H144 Z M149 163.6 V166 H151.4" />
</g>
<!-- right toolbar -->
<path d="M854 166.5 H864 M859 161.7 V171.4" stroke="#90929e" stroke-width="1.15"/>
<path d="M895.8 166.2 H903.8" stroke="#5a5b66" stroke-width="1.15"/>
<g stroke="#82848f" stroke-width="1.05">
<path d="M938.6 162.8 V161.6 H943.6 L946 164 V169.8 H944"/>
<path d="M936 163.2 H941.2 L943.6 165.6 V171.4 H936 Z M941 163.4 V165.8 H943.4" />
</g>
<!-- tree chevron -->
<path d="M62.6 194.8 L67.2 199.5 L71.8 194.8" stroke="#ececf0" stroke-width="1.7"/>
<!-- chat icon -->
<path d="M1518.2 876.6 Q1518.2 875.7 1519.1 875.7 H1531.7 Q1532.6 875.7 1532.6 876.6 V886.4 Q1532.6 887.3 1531.7 887.3 H1525.8 L1523.2 890.2 L1520.6 887.3 H1519.1 Q1518.2 887.3 1518.2 886.4 Z" stroke="#a8acba" stroke-width="1.3" stroke-linejoin="miter"/>
</svg>

<span class="t" style="left:61.30px;top:873px;line-height:15px;height:15px;font-size:13px;color:#c8c8cc;letter-spacing:-0.053px;-webkit-text-stroke:0.35px #c8c8cc;">Instrument License</span>
<span class="t" style="left:268.20px;top:873px;line-height:15px;height:15px;font-size:13px;color:#c8c8cc;letter-spacing:-0.206px;-webkit-text-stroke:0.35px #c8c8cc;">Connected</span>
</div></body></html>
